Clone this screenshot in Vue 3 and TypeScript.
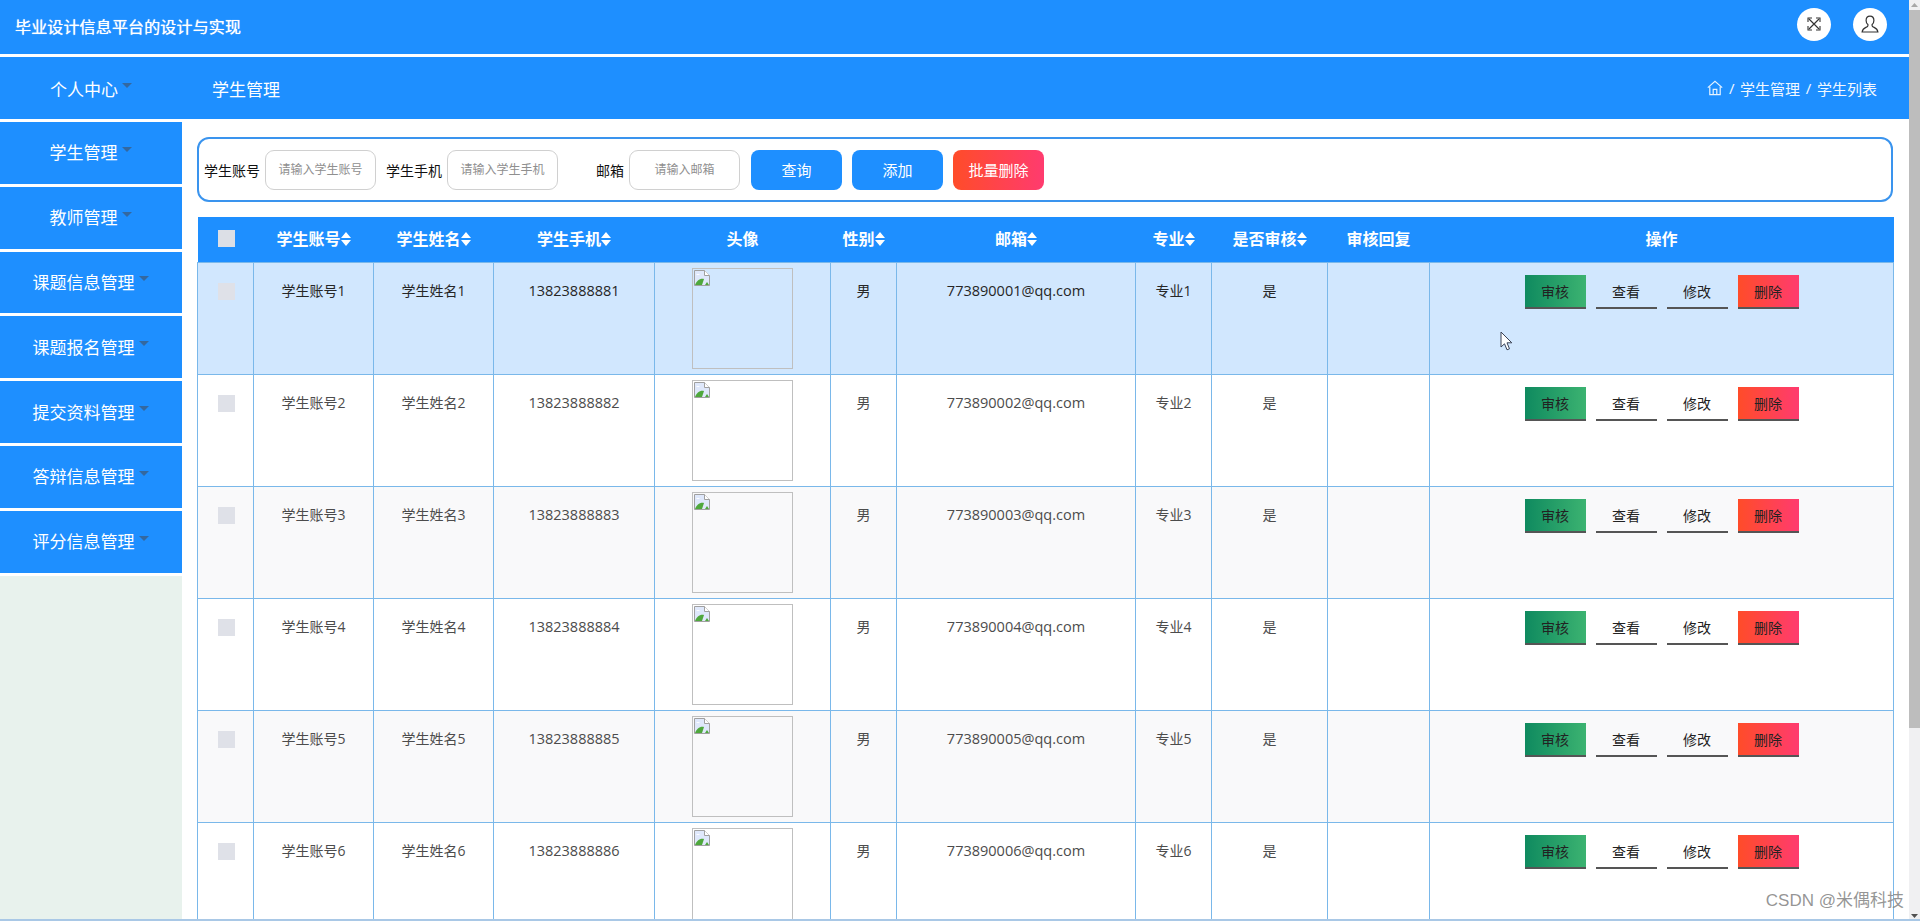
<script setup lang="ts">
interface Row {
  id: number
  account: string
  name: string
  phone: string
  gender: string
  email: string
  major: string
  checked: string
}

interface Head {
  label: string
  sort: boolean
}

const menus: string[] = ['学生管理', '教师管理', '课题信息管理', '课题报名管理', '提交资料管理', '答辩信息管理', '评分信息管理']

const heads: Head[] = [
  { label: '学生账号', sort: true },
  { label: '学生姓名', sort: true },
  { label: '学生手机', sort: true },
  { label: '头像', sort: false },
  { label: '性别', sort: true },
  { label: '邮箱', sort: true },
  { label: '专业', sort: true },
  { label: '是否审核', sort: true },
  { label: '审核回复', sort: false },
  { label: '操作', sort: false }
]

const rows: Row[] = [1, 2, 3, 4, 5, 6].map((n) => ({
  id: n,
  account: `学生账号${n}`,
  name: `学生姓名${n}`,
  phone: `1382388888${n}`,
  gender: '男',
  email: `77389000${n}@qq.com`,
  major: `专业${n}`,
  checked: '是'
}))

const filters = [
  { label: '学生账号', placeholder: '请输入学生账号' },
  { label: '学生手机', placeholder: '请输入学生手机' },
  { label: '邮箱', placeholder: '请输入邮箱' }
]
</script>

<template>
  <div class="root">
    <div class="page">
      <header class="top">
        <div class="title">毕业设计信息平台的设计与实现</div>
        <div class="top-icons">
          <span class="circle">
            <svg width="16" height="16" viewBox="0 0 16 16" fill="none" stroke="#333" stroke-width="1.2">
              <path d="M3 3l10 10M13 3L3 13" />
              <path d="M2 6V2h4M10 2h4v4M14 10v4h-4M6 14H2v-4" stroke-width="1.1" />
            </svg>
          </span>
          <span class="circle">
            <svg width="20" height="18" viewBox="0 0 20 18" fill="none" stroke="#333" stroke-width="1.2">
              <path d="M10 1.200c-2.400 0-3.900 1.800-3.900 4.200 0 1.800.8 3.200 1.800 4.100v1.200c0 .8-.8 1.200-2 1.700-1.700.7-3.400 1.600-3.800 4.600h15.800c-.4-3-2.100-3.900-3.800-4.600-1.200-.5-2-.9-2-1.700V9.500c1-.9 1.800-2.300 1.800-4.100 0-2.400-1.500-4.200-3.900-4.200z" />
            </svg>
          </span>
        </div>
      </header>

      <nav class="nav">
        <div class="menu-item nav-first">个人中心<i class="caret"></i></div>
        <div class="nav-title">学生管理</div>
        <div class="crumbs">
          <svg class="home" width="16" height="16" viewBox="0 0 16 16" fill="none" stroke="#e6f3ff" stroke-width="1.2">
            <path d="M.8 7.600 8 1.400l7.200 6.200" />
            <path d="M2.800 6.600v8h10.400v-8" />
            <path d="M6.200 14.600V9.400h3.600v5.200" />
          </svg>
          <span class="sep">/</span>
          <span>学生管理</span>
          <span class="sep">/</span>
          <span>学生列表</span>
        </div>
      </nav>

      <div class="body">
        <aside class="side">
          <div v-for="m in menus" :key="m" class="menu-item side-item">{{ m }}<i class="caret"></i></div>
        </aside>

        <main class="content">
          <form class="filter" @submit.prevent>
            <div v-for="f in filters" :key="f.label" class="field">
              <label class="field-label">{{ f.label }}</label>
              <input class="field-input" type="text" :placeholder="f.placeholder" />
            </div>
            <button class="btn" type="button">查询</button>
            <button class="btn" type="button">添加</button>
            <button class="btn btn-danger" type="button">批量删除</button>
          </form>

          <table class="grid">
            <colgroup>
              <col class="c-check" />
              <col class="c-account" />
              <col class="c-name" />
              <col class="c-phone" />
              <col class="c-avatar" />
              <col class="c-gender" />
              <col class="c-email" />
              <col class="c-major" />
              <col class="c-state" />
              <col class="c-reply" />
              <col class="c-ops" />
            </colgroup>
            <thead>
              <tr>
                <th><span class="check head-check"></span></th>
                <th v-for="h in heads" :key="h.label">
                  {{ h.label }}<svg v-if="h.sort" class="sort" width="10" height="14" viewBox="0 0 10 14" fill="#fff"><path d="M5 0l5 6H0zM5 14 0 8h10z" /></svg>
                </th>
              </tr>
            </thead>
            <tbody>
              <tr v-for="r in rows" :key="r.id" :class="{ hover: r.id === 1, stripe: r.id === 3 || r.id === 5 }">
                <td class="td-check"><span class="check"></span></td>
                <td>{{ r.account }}</td>
                <td>{{ r.name }}</td>
                <td class="wide">{{ r.phone }}</td>
                <td class="td-avatar">
                  <span class="broken">
                    <svg width="16" height="16" viewBox="0 0 16 16">
                      <path d="M.5.5h10l5 5v10H.5z" fill="#dfe8fb" stroke="#a0a0a0" />
                      <path d="M10.500.5v5h5" fill="#fff" stroke="#a0a0a0" />
                      <path d="M2 5c1-1.500 3-1.500 4 0z" fill="#fff" />
                      <path d="M1 15c1.500-4 5-7 9-6l-2 6z" fill="#4fa83d" />
                      <path d="M11 15l2-3 2 3z" fill="#4fa83d" />
                    </svg>
                  </span>
                </td>
                <td>{{ r.gender }}</td>
                <td class="wide">{{ r.email }}</td>
                <td>{{ r.major }}</td>
                <td>{{ r.checked }}</td>
                <td></td>
                <td class="td-ops">
                  <div class="ops">
                    <button class="op op-green" type="button">审核</button>
                    <button class="op" type="button">查看</button>
                    <button class="op" type="button">修改</button>
                    <button class="op op-red" type="button">删除</button>
                  </div>
                </td>
              </tr>
            </tbody>
          </table>
        </main>
      </div>
    </div>

    <div class="scrollbar">
      <svg class="arrow" width="11" height="10" viewBox="0 0 11 10"><path d="M5.500 3 9 7H2z" fill="#a8a8a8" /></svg>
      <div class="thumb"></div>
      <div class="track"></div>
      <svg class="arrow" width="11" height="10" viewBox="0 0 11 10"><path d="M5.500 7 2 3h7z" fill="#505050" /></svg>
    </div>

    <svg class="cursor" width="13" height="20" viewBox="0 0 13 20">
      <path d="M1 1v15l3.500-3.200 2.500 6 2.500-1-2.500-6h4.800z" fill="#fff" stroke="#3a4256" stroke-width="1" />
    </svg>
    <div class="watermark">CSDN @米偶科技</div>
    <div class="bottom-edge"></div>
  </div>
</template>

<style>
html,
body {
  margin: 0;
  overflow: hidden;
  background: #fff;
}
</style>

<style scoped>
.root {
  position: relative;
  display: flex;
  width: 1920px;
  height: 921px;
  overflow: hidden;
  background: #fff;
  font-family: "Open Sans", "Noto Sans CJK SC", sans-serif;
  color: #333;
}

.page {
  width: 1909px;
  flex: none;
  display: flex;
  flex-direction: column;
}

.top {
  height: 54px;
  margin-bottom: 3px;
  flex: none;
  display: flex;
  align-items: center;
  justify-content: space-between;
  padding: 0 22px 0 15px;
  background: #1e8fff;
}

.title {
  font-size: 16px;
  letter-spacing: 0.15px;
  color: #fff;
  text-shadow: 0 0 0.8px #fff;
  margin-top: -3px;
}

.top-icons {
  display: flex;
  gap: 22px;
  margin-top: -6px;
}

.circle {
  width: 34px;
  height: 33px;
  border-radius: 50%;
  background: #fff;
  display: flex;
  align-items: center;
  justify-content: center;
}

.nav {
  height: 62px;
  margin-bottom: 3px;
  flex: none;
  display: flex;
  align-items: center;
  background: #1e8fff;
  color: #fff;
}

.menu-item {
  width: 182px;
  flex: none;
  display: flex;
  align-items: center;
  justify-content: center;
  background: #1e8fff;
  color: #fff;
  font-size: 17px;
}

.nav-first {
  height: 62px;
}

.caret {
  flex: none;
  width: 0;
  height: 0;
  margin-left: 4px;
  margin-top: -5px;
  border-left: 5px solid transparent;
  border-right: 5px solid transparent;
  border-top: 5px solid #34689f;
}

.nav-title {
  margin-left: 30px;
  font-size: 17px;
}

.crumbs {
  margin-left: auto;
  padding-right: 32px;
  display: flex;
  align-items: center;
  font-size: 15px;
  color: #f2f8ff;
}

.sep {
  margin: 0 5.700px;
}

.body {
  flex: 1;
  min-height: 0;
  display: flex;
}

.side {
  width: 182px;
  flex: none;
  background: #e8f2ed;
}

.side-item {
  height: 61.800px;
  box-sizing: border-box;
  padding: 0 1px 2px 0;
  margin-bottom: 3px;
  box-shadow: 0 3px 0 #fff;
}

.content {
  flex: 1;
  min-width: 0;
  padding: 15px 16px 0 15px;
  overflow: hidden;
}

.filter {
  height: 65px;
  box-sizing: border-box;
  display: flex;
  align-items: center;
  padding: 0 0 0 4px;
  margin-bottom: 15px;
  border: 2px solid #3a94ee;
  border-radius: 12px;
}

.field {
  display: flex;
  align-items: center;
  gap: 5px;
  margin-right: 9px;
}

.field-label {
  width: 57px;
  text-align: right;
  font-size: 14px;
  color: #111;
}

.field-input {
  width: 111px;
  height: 40px;
  box-sizing: border-box;
  padding: 0 8px;
  border: 1px solid #d0d0d0;
  border-radius: 9px;
  background: #fff;
  outline: none;
  text-align: center;
  font-family: inherit;
  font-size: 12px;
}

.field-input::placeholder {
  color: #8f8f8f;
}

.btn {
  width: 91px;
  height: 40px;
  margin-left: 2px;
  margin-right: 8px;
  padding: 0;
  border: none;
  border-radius: 8px;
  background: #1e8fff;
  color: #fff;
  font-family: inherit;
  font-size: 15px;
}

.btn-danger {
  background: linear-gradient(90deg, #ff4c29, #ff3b6f);
}

.grid {
  width: 1696px;
  table-layout: fixed;
  border-collapse: collapse;
  font-size: 14px;
}

.c-check { width: 56px; }
.c-account { width: 120px; }
.c-name { width: 120px; }
.c-phone { width: 161px; }
.c-avatar { width: 176px; }
.c-gender { width: 66px; }
.c-email { width: 239px; }
.c-major { width: 76px; }
.c-state { width: 116px; }
.c-reply { width: 102px; }
.c-ops { width: 464px; }

th {
  height: 45px;
  padding: 0 0 2px;
  box-sizing: border-box;
  background: #1e8fff;
  color: #fff;
  font-size: 16px;
  font-weight: 700;
  text-align: center;
  vertical-align: middle;
  white-space: nowrap;
}

.sort {
  vertical-align: -1px;
}

td {
  height: 112px;
  box-sizing: border-box;
  padding: 17px 0 0;
  border: 1px solid #7ab8ea;
  text-align: center;
  vertical-align: top;
  line-height: 22px;
  color: #4c4c4c;
  background: #fff;
}

td.wide {
  font-size: 14.500px;
}

tr.stripe td {
  background: #f9f9fa;
}

tr.hover td {
  background: #d1e7fe;
  color: #262626;
}

.check {
  display: block;
  width: 17px;
  height: 17px;
  background: #dfe1e8;
}

.head-check {
  margin-left: 20px;
  background: #dcdfe6;
}

.td-check {
  padding: 20px 0 0 20px;
}

.td-avatar {
  padding-top: 5px;
}

.broken {
  display: block;
  width: 101px;
  height: 101px;
  box-sizing: border-box;
  margin: 0 auto;
  padding: 1px;
  border: 1px solid #bfbfbf;
  line-height: 0;
  text-align: left;
}

.td-ops {
  padding-top: 12px;
}

.ops {
  display: flex;
  justify-content: center;
  gap: 10px;
}

.op {
  width: 61px;
  height: 34px;
  padding: 0;
  border: none;
  border-bottom: 2px solid #555;
  background: transparent;
  color: #222;
  font-family: inherit;
  font-size: 14px;
}

.op-green {
  background: linear-gradient(90deg, #0f8a5f, #3cb371);
}

.op-red {
  background: linear-gradient(90deg, #ff4c29, #ff3b6f);
}

.scrollbar {
  width: 11px;
  flex: none;
  display: flex;
  flex-direction: column;
  background: #f0f0f2;
}

.arrow {
  flex: none;
}

.thumb {
  height: 718px;
  flex: none;
  background: #bdbdbd;
}

.track {
  flex: 1;
}

.cursor {
  position: absolute;
  left: 1500px;
  top: 331px;
}

.watermark {
  position: absolute;
  right: 16px;
  top: 889px;
  font-family: "Liberation Sans", "Noto Sans CJK SC", sans-serif;
  font-size: 17px;
  line-height: 24px;
  color: rgba(130, 130, 130, 0.85);
}

.bottom-edge {
  position: absolute;
  left: 0;
  right: 0;
  bottom: 0;
  height: 2px;
  background: #a9c8e6;
}
</style>
